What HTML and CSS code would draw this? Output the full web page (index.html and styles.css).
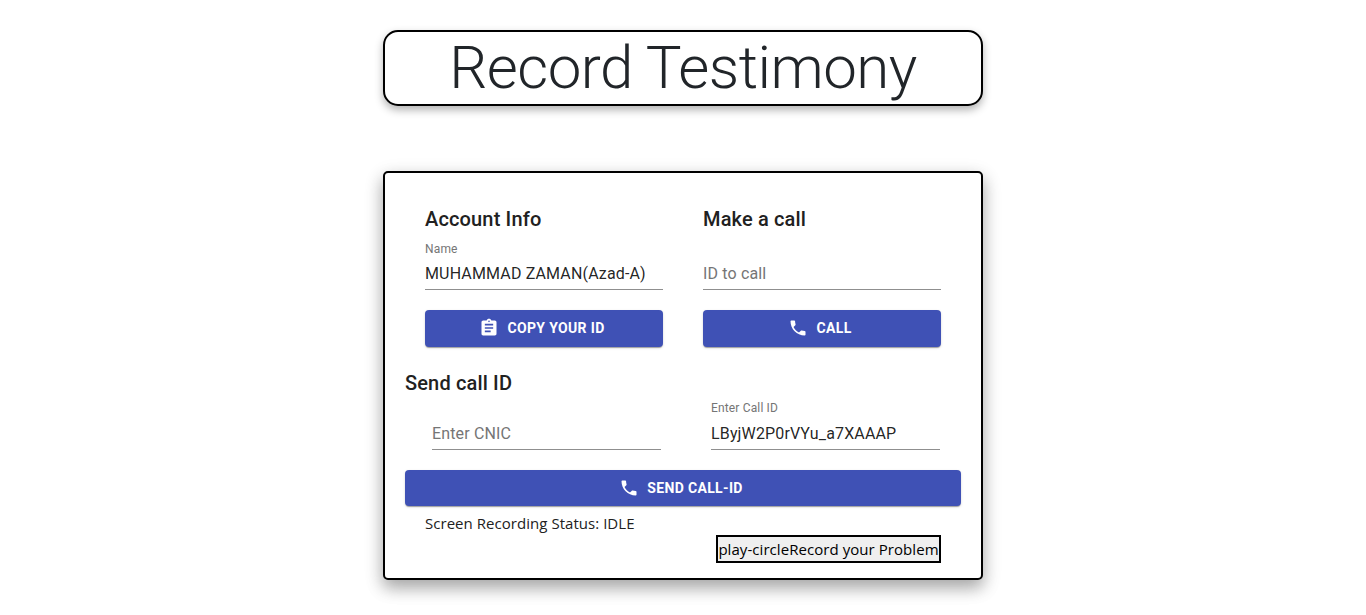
FILE: index.html
```html
<!DOCTYPE html>
<html lang="en">
<head>
<meta charset="utf-8">
<title>Record Testimony</title>
<link rel="stylesheet" href="styles.css">
</head>
<body>
<main class="page">
  <h1 class="title">Record Testimony</h1>
  <section class="card">
    <div class="row">
      <div class="col">
        <h2 class="heading">Account Info</h2>
        <div class="field">
          <span class="label">Name</span>
          <span class="value">MUHAMMAD ZAMAN(Azad-A)</span>
        </div>
        <button class="btn">
          <svg class="icon" viewBox="0 0 24 24"><path d="M19 3h-4.18C14.4 1.84 13.3 1 12 1c-1.3 0-2.4.84-2.82 2H5c-1.1 0-2 .9-2 2v14c0 1.1.9 2 2 2h14c1.1 0 2-.9 2-2V5c0-1.1-.9-2-2-2zm-7 0c.55 0 1 .45 1 1s-.45 1-1 1-1-.45-1-1 .45-1 1-1zm2 14H7v-2h7v2zm3-4H7v-2h10v2zm0-4H7V7h10v2z"/></svg>
          <span>Copy Your ID</span>
        </button>
      </div>
      <div class="col">
        <h2 class="heading">Make a call</h2>
        <div class="field">
          <span class="placeholder">ID to call</span>
        </div>
        <button class="btn">
          <svg class="icon" viewBox="0 0 24 24"><path d="M6.62 10.79c1.44 2.83 3.76 5.14 6.59 6.59l2.2-2.2c.27-.27.67-.36 1.02-.24 1.12.37 2.33.57 3.57.57.55 0 1 .45 1 1V20c0 .55-.45 1-1 1-9.39 0-17-7.61-17-17 0-.55.45-1 1-1h3.5c.55 0 1 .45 1 1 0 1.25.2 2.45.57 3.57.11.35.03.74-.25 1.02l-2.2 2.2z"/></svg>
          <span>Call</span>
        </button>
      </div>
    </div>
    <h2 class="heading send-heading">Send call ID</h2>
    <div class="send-fields">
      <div class="field">
        <span class="placeholder">Enter CNIC</span>
      </div>
      <div class="field">
        <span class="label">Enter Call ID</span>
        <span class="value">LByjW2P0rVYu_a7XAAAP</span>
      </div>
    </div>
    <button class="btn wide">
      <svg class="icon" viewBox="0 0 24 24"><path d="M6.62 10.79c1.44 2.83 3.76 5.14 6.59 6.59l2.2-2.2c.27-.27.67-.36 1.02-.24 1.12.37 2.33.57 3.57.57.55 0 1 .45 1 1V20c0 .55-.45 1-1 1-9.39 0-17-7.61-17-17 0-.55.45-1 1-1h3.5c.55 0 1 .45 1 1 0 1.25.2 2.45.57 3.57.11.35.03.74-.25 1.02l-2.2 2.2z"/></svg>
      <span>Send Call-ID</span>
    </button>
    <p class="status">Screen Recording Status: IDLE</p>
    <div class="record-row">
      <button class="record">play-circleRecord your Problem</button>
    </div>
  </section>
</main>
</body>
</html>
```
FILE: styles.css
```css
* { box-sizing: border-box; }
html, body { margin: 0; padding: 0; background: #fff; }
body { font-family: Roboto, "Liberation Sans", sans-serif; color: #212121; height: 615px; overflow: hidden; }
.page { width: 600px; margin: 0 auto; padding-top: 30px; }
.title {
  margin: 0; height: 76px; border: 2px solid #000; border-radius: 15px;
  font-size: 60px; font-weight: 300; line-height: 72px; text-align: center; color: #212529;
  letter-spacing: -.5px;
  box-shadow: 0 4px 8px rgba(0,0,0,.3); background: #fff;
}
.card {
  margin-top: 65px; height: 409px; border: 2px solid #000; border-radius: 5px; background: #fff;
  padding: 20px;
  box-shadow: 0 8px 16px rgba(0,0,0,.25), 0 6px 20px rgba(0,0,0,.15);
}
.row { display: grid; grid-template-columns: 1fr 1fr; }
.col { padding: 0 20px; display: flex; flex-direction: column; }
.heading { margin: 0; font-size: 20px; font-weight: 500; line-height: 32px; color: #212121; letter-spacing: .15px; }
.col .heading { margin-top: 10px; }
.field { position: relative; height: 48px; border-bottom: 1px solid #8f8f8f; margin-top: 7px; padding-top: 22px; font-size: 16px; line-height: 19px; letter-spacing: .15px; }
.label { position: absolute; left: 0; top: 0; font-size: 12px; line-height: 14px; color: #757575; }
.value { color: rgba(0,0,0,.87); }
.placeholder { color: #757575; }
.btn {
  display: flex; align-items: center; justify-content: center; gap: 8px;
  width: 100%; height: 37px; margin-top: 20px; padding: 0 0 2px; border: 0; border-radius: 4px;
  background: #3f51b5; color: #fff; font-family: inherit; font-size: 14px; font-weight: 700;
  letter-spacing: .35px; text-transform: uppercase;
  box-shadow: 0 2px 1px -1px rgba(0,0,0,.2), 0 1px 1px 0 rgba(0,0,0,.14), 0 1px 3px 0 rgba(0,0,0,.12);
}
.icon { width: 20px; height: 20px; margin-left: -4px; fill: #fff; flex: none; }
.send-heading { margin-top: 20px; }
.send-fields { display: grid; grid-template-columns: 229px 229px; column-gap: 50px; padding-left: 27px; }
.send-fields .field { margin-top: 1px; height: 50px; padding-top: 24px; }
.send-fields .label { top: 1px; }
.wide { margin-top: 20px; height: 36px; padding-bottom: 1px; }
.status { margin: 8px 0 0 20px; font-family: "Open Sans", sans-serif; font-size: 15px; line-height: 19px; color: #212121; letter-spacing: .04px; }
.record-row { display: flex; justify-content: flex-end; padding-right: 20px; margin-top: 2px; }
.record {
  height: 28px; width: 225px; padding: 0; border: 2px solid #000; background: #efefef; color: #000;
  font-family: "Open Sans", sans-serif; font-size: 15px; letter-spacing: .06px; white-space: nowrap;
}
```
